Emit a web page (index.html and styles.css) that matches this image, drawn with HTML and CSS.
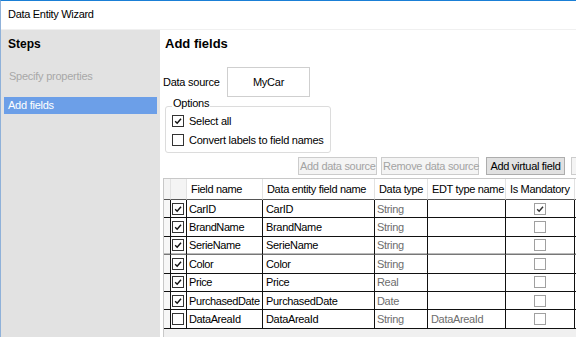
FILE: index.html
```html
<!DOCTYPE html>
<html>
<head>
<meta charset="utf-8">
<link rel="stylesheet" href="styles.css">
</head>
<body>
<div class="window">
  <div class="titlebar">Data Entity Wizard</div>
  <div class="content">
    <aside class="steps">
      <div class="steps-title">Steps</div>
      <div class="step disabled">Specify properties</div>
      <div class="step active">Add fields</div>
    </aside>
    <main class="page">
      <h1 class="page-title">Add fields</h1>
      <div class="ds-row">
        <span class="ds-label">Data source</span>
        <div class="ds-box">MyCar</div>
      </div>
      <div class="group">
        <span class="group-label">Options</span>
        <div class="opt"><span class="cb"><svg viewBox="0 0 12 12"><path d="M2.6 6.2 L5 8.6 L9.6 3.2"/></svg></span>Select all</div>
        <div class="opt"><span class="cb"></span>Convert labels to field names</div>
      </div>
      <div class="toolbar">
        <button class="btn disabled b1">Add data source</button>
        <button class="btn disabled b2">Remove data source</button>
        <button class="btn b3">Add virtual field</button>
        <button class="btn disabled b4"></button>
      </div>
      <div class="grid">
        <div class="row head">
          <div class="c sel"></div>
          <div class="c chk"></div>
          <div class="c w1">Field name</div>
          <div class="c w2">Data entity field name</div>
          <div class="c w3">Data type</div>
          <div class="c w4">EDT type name</div>
          <div class="c w5">Is Mandatory</div>
          <div class="c w6"></div>
        </div>
        <div class="row">
          <div class="c sel"></div>
          <div class="c chk"><span class="cb"><svg viewBox="0 0 12 12"><path d="M2.6 6.2 L5 8.6 L9.6 3.2"/></svg></span></div>
          <div class="c w1">CarID</div>
          <div class="c w2">CarID</div>
          <div class="c w3 muted">String</div>
          <div class="c w4 muted"></div>
          <div class="c w5 center"><span class="cb dim"><svg viewBox="0 0 12 12"><path d="M2.6 6.2 L5 8.6 L9.6 3.2"/></svg></span></div>
          <div class="c w6"></div>
        </div>
        <div class="row">
          <div class="c sel"></div>
          <div class="c chk"><span class="cb"><svg viewBox="0 0 12 12"><path d="M2.6 6.2 L5 8.6 L9.6 3.2"/></svg></span></div>
          <div class="c w1">BrandName</div>
          <div class="c w2">BrandName</div>
          <div class="c w3 muted">String</div>
          <div class="c w4 muted"></div>
          <div class="c w5 center"><span class="cb dim"></span></div>
          <div class="c w6"></div>
        </div>
        <div class="row current">
          <div class="c sel"></div>
          <div class="c chk"><span class="cb"><svg viewBox="0 0 12 12"><path d="M2.6 6.2 L5 8.6 L9.6 3.2"/></svg></span></div>
          <div class="c w1">SerieName</div>
          <div class="c w2">SerieName</div>
          <div class="c w3 muted">String</div>
          <div class="c w4 muted"></div>
          <div class="c w5 center"><span class="cb dim"></span></div>
          <div class="c w6"></div>
        </div>
        <div class="row">
          <div class="c sel"></div>
          <div class="c chk"><span class="cb"><svg viewBox="0 0 12 12"><path d="M2.6 6.2 L5 8.6 L9.6 3.2"/></svg></span></div>
          <div class="c w1">Color</div>
          <div class="c w2">Color</div>
          <div class="c w3 muted">String</div>
          <div class="c w4 muted"></div>
          <div class="c w5 center"><span class="cb dim"></span></div>
          <div class="c w6"></div>
        </div>
        <div class="row">
          <div class="c sel"></div>
          <div class="c chk"><span class="cb"><svg viewBox="0 0 12 12"><path d="M2.6 6.2 L5 8.6 L9.6 3.2"/></svg></span></div>
          <div class="c w1">Price</div>
          <div class="c w2">Price</div>
          <div class="c w3 muted">Real</div>
          <div class="c w4 muted"></div>
          <div class="c w5 center"><span class="cb dim"></span></div>
          <div class="c w6"></div>
        </div>
        <div class="row">
          <div class="c sel"></div>
          <div class="c chk"><span class="cb"><svg viewBox="0 0 12 12"><path d="M2.6 6.2 L5 8.6 L9.6 3.2"/></svg></span></div>
          <div class="c w1">PurchasedDate</div>
          <div class="c w2">PurchasedDate</div>
          <div class="c w3 muted">Date</div>
          <div class="c w4 muted"></div>
          <div class="c w5 center"><span class="cb dim"></span></div>
          <div class="c w6"></div>
        </div>
        <div class="row">
          <div class="c sel"></div>
          <div class="c chk"><span class="cb"></span></div>
          <div class="c w1">DataAreaId</div>
          <div class="c w2">DataAreaId</div>
          <div class="c w3 muted">String</div>
          <div class="c w4 muted">DataAreaId</div>
          <div class="c w5 center"><span class="cb dim"></span></div>
          <div class="c w6"></div>
        </div>
      </div>
    </main>
  </div>
</div>
</body>
</html>
```

FILE: styles.css
```css
* { box-sizing: border-box; }
html, body {
  margin: 0;
  padding: 0;
  width: 576px;
  height: 337px;
  overflow: hidden;
  background: #fff;
}
body {
  font-family: "Liberation Sans", Arial, sans-serif;
  font-size: 11px;
  letter-spacing: -0.25px;
  color: #000;
}
.window {
  width: 576px;
  height: 337px;
  border-top: 1px solid #1a7fd6;
  border-left: 1px solid #8fb1d9;
  display: flex;
  flex-direction: column;
  overflow: hidden;
}
.titlebar {
  height: 29px;
  flex: none;
  padding-left: 7px;
  line-height: 27px;
  letter-spacing: -0.3px;
  border-bottom: 1px solid #f0f0f0;
  background: #fff;
}
.content {
  flex: 1;
  display: flex;
  min-height: 0;
}
.steps {
  width: 159px;
  flex: none;
  background: #e2e2e2;
  padding-top: 6px;
}
.steps-title {
  font-weight: bold;
  font-size: 12px;
  letter-spacing: 0;
  line-height: 16px;
  padding-left: 7px;
}
.step {
  height: 17px;
  line-height: 17px;
}
.step.disabled {
  color: #a8a8a8;
  padding-left: 8px;
  margin-top: 16px;
}
.step.active {
  margin: 12px 3px 0 3px;
  padding-left: 4px;
  background: #6c9fe8;
  color: #fff;
}
.page {
  flex: 1;
  min-width: 0;
  overflow: hidden;
  padding: 6px 0 0 3px;
  background: #fff;
}
.page-title {
  margin: 0 0 0 2px;
  font-size: 13px;
  letter-spacing: 0;
  font-weight: bold;
  line-height: 16px;
}
.ds-row {
  display: flex;
  align-items: center;
  margin-top: 15px;
  height: 30px;
}
.ds-label {
  width: 64px;
}
.ds-box {
  width: 83px;
  height: 30px;
  border: 1px solid #cfcfcf;
  display: flex;
  align-items: center;
  justify-content: center;
}
.group {
  margin: 9px 0 0 2px;
  width: 166px;
  border: 1px solid #dcdcdc;
  border-radius: 3px;
  padding: 0 0 3px 6px;
  white-space: nowrap;
}
.group-label {
  display: block;
  width: max-content;
  margin: -11px 0 1px 0;
  padding: 0 1px;
  line-height: 14px;
  background: #fff;
}
.opt {
  display: flex;
  align-items: center;
  height: 19px;
}
.opt .cb { margin-right: 5px; }
.cb {
  display: inline-block;
  width: 12px;
  height: 12px;
  border: 1px solid #333;
  background: #fff;
  flex: none;
}
.cb svg {
  display: block;
  width: 10px;
  height: 10px;
}
.cb svg path {
  fill: none;
  stroke: #111;
  stroke-width: 1.7;
}
.cb.dim { border-color: #a0a0a0; }
.cb.dim svg path { stroke: #333; }
.toolbar {
  display: flex;
  margin: 4px 0 0 135px;
  height: 18px;
  white-space: nowrap;
}
.btn {
  font-family: inherit;
  font-size: 11px;
  letter-spacing: -0.3px;
  height: 18px;
  padding: 0 1px;
  border: 1px solid #adadad;
  background: #e1e1e1;
  color: #000;
  flex: none;
  line-height: 14px;
}
.btn.disabled {
  border-color: #cccccc;
  background: #f4f4f4;
  color: #a3a3a3;
}
.b1 { width: 79px; }
.b2 { width: 98px; margin-left: 4px; }
.b3 { width: 79px; margin-left: 7px; }
.b4 { width: 100px; margin-left: 6px; border-color: #adadad; }
.grid {
  margin-top: 3px;
  width: 480px;
  height: 160px;
  border-top: 1px solid #c8c8c8;
  border-left: 1px solid #c8c8c8;
  background: #f0f0f0;
  font-size: 11px;
  letter-spacing: -0.33px;
}
.row {
  display: flex;
  height: 18.4px;
  background: #fff;
}
.row.head {
  height: 21px;
}
.c {
  flex: none;
  height: 100%;
  border-right: 1px solid #111;
  border-bottom: 1px solid #111;
  padding-left: 3px;
  display: flex;
  align-items: center;
  white-space: nowrap;
  overflow: hidden;
}
.head .c {
  border-right-color: #e2e2e2;
  border-bottom-color: #555;
  padding-left: 4px;
}
.head .sel, .head .chk { background: #f4f4f4; }
.sel { width: 7px; background: #f7f7f7; padding: 0; }
.chk { width: 16px; padding-left: 1px; }
.w1 { width: 76px; padding-left: 2px; letter-spacing: -0.4px; }
.w2 { width: 112px; }
.w3 { width: 53px; padding-left: 2px; }
.w4 { width: 78px; }
.w5 { width: 69px; }
.w6 { width: 80px; }
.head .w1 { padding-left: 4px; letter-spacing: -0.33px; }
.muted { color: #6d6d6d; }
.center { justify-content: center; padding-left: 0; }
.row.current .c { border-bottom: 1px solid #777; box-shadow: inset 0 -1px 0 #bbb; }
```
